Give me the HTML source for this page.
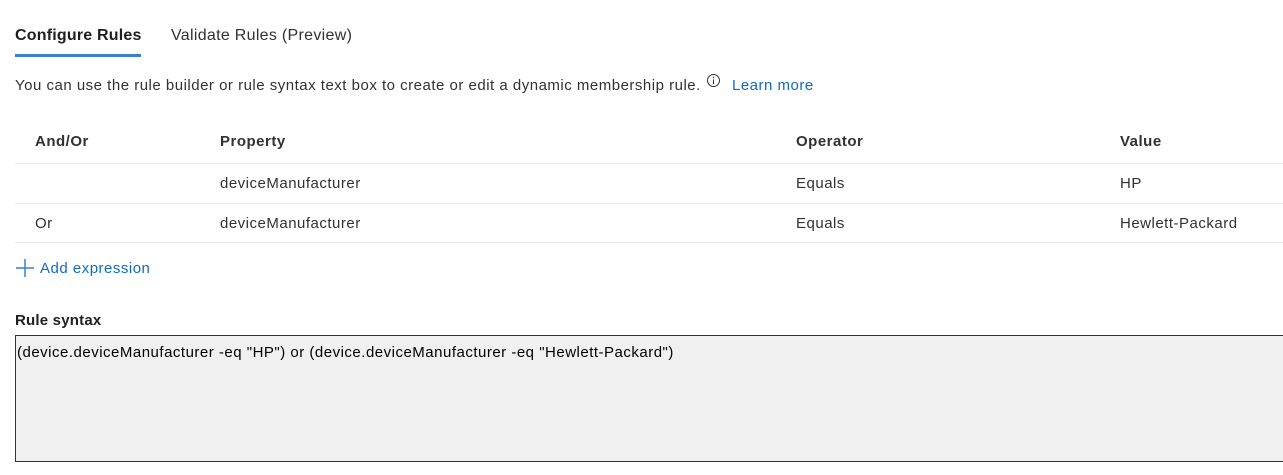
<!DOCTYPE html>
<html><head><style>
body{margin:0;width:1283px;height:475px;background:#fff;font-family:"Liberation Sans",sans-serif;color:#323130;position:relative;overflow:hidden}
.a{position:absolute;white-space:nowrap}
.tab{font-size:16px;top:27px;letter-spacing:0.3px}
.line{position:absolute;left:15px;right:0;height:1px;background:#edebe9}
.t{font-size:15px;letter-spacing:0.5px}
</style></head><body>
<div class="a tab" style="left:15px;font-weight:600;color:#201f1e;letter-spacing:0.2px">Configure Rules</div>
<div class="a tab" style="left:171px">Validate Rules (Preview)</div>
<div class="a" style="left:15px;top:54px;width:126px;height:3px;background:#3a7fd5"></div>
<div class="a t" style="left:15px;top:77px">You can use the rule builder or rule syntax text box to create or edit a dynamic membership rule.</div>
<svg class="a" style="left:706px;top:73px" width="15" height="15" viewBox="0 0 15 15"><circle cx="7.5" cy="7.5" r="6" fill="none" stroke="#323130"/><line x1="7.5" y1="6.5" x2="7.5" y2="11" stroke="#323130"/><circle cx="7.5" cy="4.5" r=".7" fill="#323130"/></svg>
<div class="a t" style="left:732px;top:77px;color:#0f6cbd">Learn more</div>
<div class="a t" style="left:35px;top:133px;font-weight:600">And/Or</div>
<div class="a t" style="left:220px;top:133px;font-weight:600">Property</div>
<div class="a t" style="left:796px;top:133px;font-weight:600">Operator</div>
<div class="a t" style="left:1120px;top:133px;font-weight:600">Value</div>
<div class="line" style="top:163px"></div>
<div class="a t" style="left:220px;top:175px">deviceManufacturer</div>
<div class="a t" style="left:796px;top:175px">Equals</div>
<div class="a t" style="left:1120px;top:175px">HP</div>
<div class="line" style="top:203px"></div>
<div class="a t" style="left:35px;top:215px">Or</div>
<div class="a t" style="left:220px;top:215px">deviceManufacturer</div>
<div class="a t" style="left:796px;top:215px">Equals</div>
<div class="a t" style="left:1120px;top:215px">Hewlett-Packard</div>
<div class="line" style="top:242px"></div>
<svg class="a" style="left:15px;top:258px" width="20" height="20" viewBox="0 0 20 20"><path d="M10 1v18M1 10h18" stroke="#3a7fd5" stroke-width="1.5"/></svg>
<div class="a t" style="left:40px;top:260px;color:#0f6cbd">Add expression</div>
<div class="a t" style="left:15px;top:312px;font-weight:700;color:#201f1e;letter-spacing:0.2px">Rule syntax</div>
<div class="a" style="left:15px;top:335px;width:1280px;height:127px;background:#f0f0f0;border:1px solid #333;box-sizing:border-box"></div>
<div class="a t" style="left:17px;top:344px;color:#000">(device.deviceManufacturer -eq "HP") or (device.deviceManufacturer -eq "Hewlett-Packard")</div>
</body></html>
